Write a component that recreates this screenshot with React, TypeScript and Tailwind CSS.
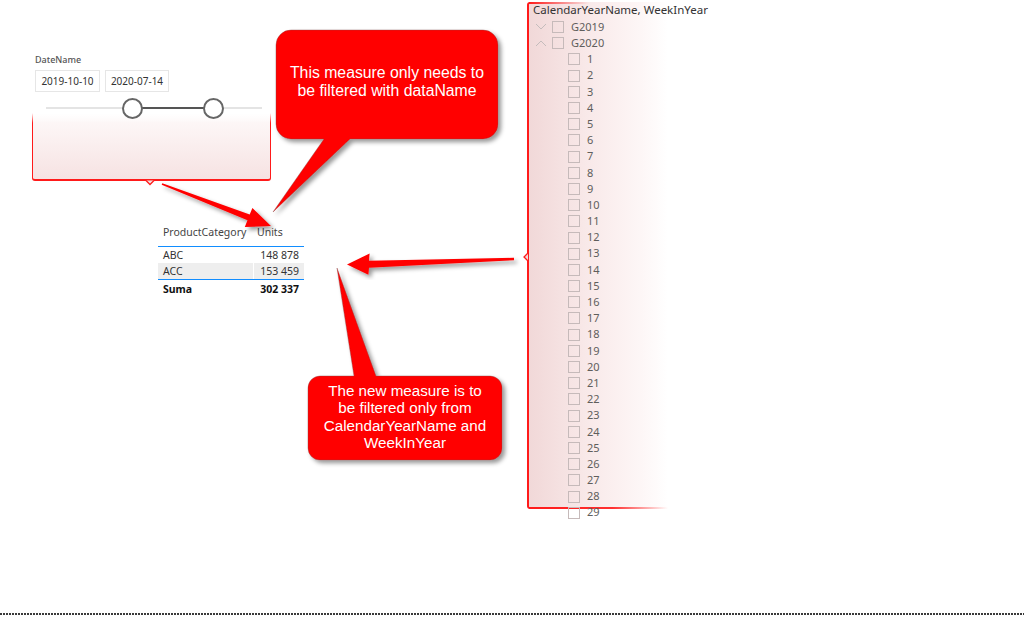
import React from "react";

const weeks = Array.from({ length: 29 }, (_, i) => i + 1);

function Chevron({ up }: { up?: boolean }) {
  return (
    <svg width="12" height="8" viewBox="0 0 12 8" className="shrink-0">
      <path
        d={up ? "M1 7 L6 2 L11 7" : "M1 1 L6 6 L11 1"}
        fill="none"
        stroke="#c4bcbc"
        strokeWidth="1"
      />
    </svg>
  );
}

function Box() {
  return <span className="w-[12px] h-[12px] border border-[#c6baba] shrink-0" />;
}

function DateSlicer() {
  return (
    <>
      {/* selection frame */}
      <div className="absolute left-[32px] top-[113px] w-[239px] h-[68px] rounded-b-[3px] border-x-[1.5px] border-b-2 border-[#ff1a1a] bg-[linear-gradient(to_bottom,#fefafa,#f6e2e2)]">
        <div className="absolute -left-[2px] -right-[2px] top-0 h-[10px] bg-[linear-gradient(to_bottom,#ffffff,rgba(255,255,255,0))]" />
      </div>

      <div className="absolute left-[35px] top-[53px] text-[9px] font-medium text-[#555] font-['Noto_Sans',sans-serif]">
        DateName
      </div>
      <div className="absolute left-[35px] top-[70px] flex gap-[5px] font-['Noto_Sans',sans-serif] text-[10px] text-[#333]">
        <div className="w-[65px] h-[22px] border border-[#e6e6e6] flex items-center justify-center bg-white">
          2019-10-10
        </div>
        <div className="w-[64px] h-[22px] border border-[#e6e6e6] flex items-center justify-center bg-white">
          2020-07-14
        </div>
      </div>

      {/* slider */}
      <div className="absolute left-[46px] top-[107px] w-[216px] h-[2px] bg-[#e4e4e4]" />
      <div className="absolute left-[132px] top-[107px] w-[81px] h-[2px] bg-[#555]" />
      <div className="absolute left-[122px] top-[98px] w-[21px] h-[21px] rounded-full border-2 border-[#666] bg-white" />
      <div className="absolute left-[203px] top-[98px] w-[21px] h-[21px] rounded-full border-2 border-[#666] bg-white" />
    </>
  );
}

function UnitsTable() {
  return (
    <div className="absolute left-[158px] top-[222px] w-[146px] font-['Noto_Sans',sans-serif] text-[10.5px] text-[#333]">
      <div className="flex h-[25px] border-b border-[#118dff] text-[#444]">
        <div className="w-[95px] pl-[5px] pt-[2px] leading-[16px]">ProductCategory</div>
        <div className="flex-1 pl-[4px] pt-[2px] leading-[16px]">Units</div>
      </div>
      <div className="flex h-[16px] leading-[16px]">
        <div className="w-[95px] pl-[5px]">ABC</div>
        <div className="flex-1 text-right pr-[5px]">148 878</div>
      </div>
      <div className="flex h-[17px] leading-[16px] border-b border-[#118dff]">
        <div className="w-[95px] pl-[5px] bg-[#eeeeee]">ACC</div>
        <div className="flex-1 text-right pr-[5px] bg-[#eeeeee] border-l border-white">153 459</div>
      </div>
      <div className="flex h-[18px] leading-[18px] font-bold text-[#111]">
        <div className="w-[95px] pl-[5px]">Suma</div>
        <div className="flex-1 text-right pr-[5px]">302 337</div>
      </div>
    </div>
  );
}

function WeekSlicer() {
  return (
    <>
      {/* selection frame */}
      <div className="absolute left-[527px] top-[2px] w-[141px] h-[507px] rounded-l-[3px] border-l-2 border-[#ff1a1a] bg-[linear-gradient(to_right,#f1d8d8,#f9eaea_45%,#fdf6f6_80%,#ffffff)]">
        <div className="absolute left-0 right-0 -bottom-0 h-[2px] bg-[linear-gradient(to_right,#ff1a1a,#ff3030_60%,rgba(255,80,80,0))]" />
        <div className="absolute left-0 top-0 w-[60px] h-[2px] bg-[linear-gradient(to_right,#ff1a1a,rgba(255,80,80,0))]" />
      </div>

      <div className="absolute left-[533px] top-[2px] font-['Noto_Sans',sans-serif]">
        <div className="h-[17px] leading-[16px] text-[11.5px] text-[#333]">
          CalendarYearName, WeekInYear
        </div>
        <div className="text-[11px] text-[#605e5c]">
          <div className="flex items-center h-[16.2px] gap-[5px] pl-[2px]">
            <Chevron />
            <Box />
            <span className="pl-[2px]">G2019</span>
          </div>
          <div className="flex items-center h-[16.2px] gap-[5px] pl-[2px]">
            <Chevron up />
            <Box />
            <span className="pl-[2px]">G2020</span>
          </div>
          {weeks.map((w) => (
            <div key={w} className="flex items-center h-[16.2px] gap-[7px] pl-[35px]">
              <Box />
              <span>{w}</span>
            </div>
          ))}
        </div>
      </div>
    </>
  );
}

function Overlay() {
  return (
    <svg
      className="absolute left-0 top-0 pointer-events-none"
      width="1024"
      height="625"
      viewBox="0 0 1024 625"
    >
      <defs>
        <filter id="sh" x="-20%" y="-20%" width="140%" height="140%">
          <feDropShadow dx="3" dy="3" stdDeviation="2.2" floodColor="#000" floodOpacity="0.4" />
        </filter>
      </defs>
      {/* frame notches */}
      <path d="M146 180.5 L150 184.5 L154 180.5" fill="#f6e2e2" stroke="#ff1a1a" strokeWidth="1.3" />
      <path d="M528 253 L524 257 L528 261" fill="#f1d8d8" stroke="#ff1a1a" strokeWidth="1.3" />

      {/* callout 1 */}
      <path
        filter="url(#sh)"
        d="M291 30 H483 A15 15 0 0 1 498 45 V124 A15 15 0 0 1 483 139 H350 L273 212 L324 139 H291 A15 15 0 0 1 276 124 V45 A15 15 0 0 1 291 30 Z"
        fill="#ff0000"
        stroke="#8a4a4a"
        strokeOpacity="0.5"
        strokeWidth="0.8"
      />
      {/* callout 2 */}
      <path
        filter="url(#sh)"
        d="M320 376 H354 L337 268 L376 376 H490 A12 12 0 0 1 502 388 V448 A12 12 0 0 1 490 460 H320 A12 12 0 0 1 308 448 V388 A12 12 0 0 1 320 376 Z"
        fill="#ff0000"
        stroke="#8a4a4a"
        strokeOpacity="0.5"
        strokeWidth="0.8"
      />
      {/* arrow slicer -> table */}
      <path
        filter="url(#sh)"
        d="M161.7 184.7 L247.5 220.2 L244.8 227 L271 226 L252.4 208 L249.7 214.6 L162.3 183.3 Z"
        fill="#ff0000"
      />
      {/* arrow week slicer -> table */}
      <path
        filter="url(#sh)"
        d="M514 257.8 L369 260.7 L369.6 253.5 L347 264.5 L368.4 274.8 L369 267.7 L514 260.2 Z"
        fill="#ff0000"
      />
    </svg>
  );
}

export default function App() {
  return (
    <div className="relative w-[1024px] h-[625px] bg-white overflow-hidden">
      <DateSlicer />
      <UnitsTable />
      <WeekSlicer />
      <Overlay />

      <div className="absolute left-[276px] top-[64px] w-[222px] text-center text-white text-[15.8px] leading-[18px] font-['Liberation_Sans',Arial,sans-serif]">
        This measure only needs to
        <br />
        be filtered with dataName
      </div>
      <div className="absolute left-[308px] top-[382px] w-[194px] text-center text-white text-[15.2px] leading-[17.4px] font-['Liberation_Sans',Arial,sans-serif]">
        The new measure is to
        <br />
        be filtered only from
        <br />
        CalendarYearName and
        <br />
        WeekInYear
      </div>

      <div className="absolute left-0 top-[613px] w-[1024px] h-[2px] bg-[repeating-linear-gradient(to_right,#3a3a3a_0px,#3a3a3a_2px,transparent_2px,transparent_3px)]" />
    </div>
  );
}
